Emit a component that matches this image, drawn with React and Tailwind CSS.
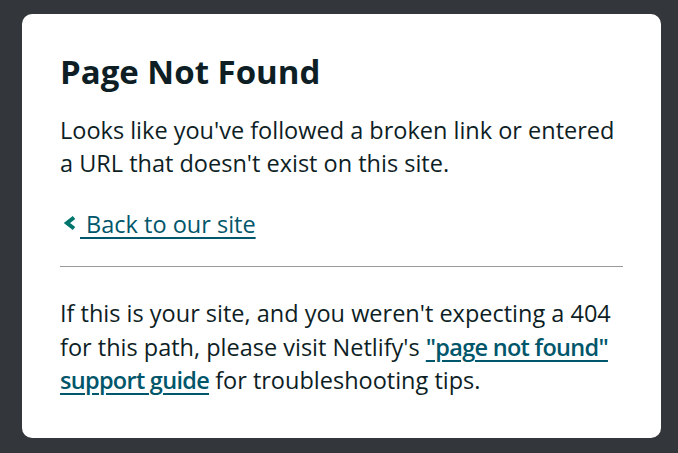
import React from 'react';

const ChevronLeft = () => (
  <svg viewBox="0 0 16 16" className="inline-block w-[16px] h-[16px] ml-[2px] mr-[2px] align-[2px]" aria-hidden="true">
    <path d="M12 2.5 L5 8 L12 13.5" fill="none" stroke="#00756c" strokeWidth="4" />
  </svg>
);

export default function App() {
  return (
    <div
      className="min-h-[453px] bg-[#33363b] pl-[22px] pr-[17px] pt-[14px] pb-[15px]"
      style={{ fontFamily: '"Open Sans", "Noto Sans", sans-serif' }}
    >
      <div className="bg-white rounded-[10px] px-[38px] pt-[38px] pb-[40px] text-[#0e1e25]">
        <h1 className="text-[33px] font-bold leading-[40px] mb-[22px]">Page Not Found</h1>
        <p className="text-[23.5px] leading-[33px]">
          Looks like you've followed a broken link or entered a URL that doesn't exist on this site.
        </p>
        <p className="mt-[28px] text-[23.5px] leading-[33px]">
          <a href="#" className="text-[#00566a] underline underline-offset-[4px] decoration-2">
            <ChevronLeft /> Back to our site
          </a>
        </p>
        <hr className="mt-[25px] mb-[30px] border-0 border-t border-[#9a9a9a]" />
        <p className="text-[23.5px] leading-[33.5px]">
          If this is your site, and you weren't expecting a 404 for this path, please visit Netlify's{' '}
          <a href="#" className="text-[#00566a] font-semibold tracking-[-0.03em] underline underline-offset-[4px] decoration-2">
            "page not found" support guide
          </a>{' '}
          for troubleshooting tips.
        </p>
      </div>
    </div>
  );
}
